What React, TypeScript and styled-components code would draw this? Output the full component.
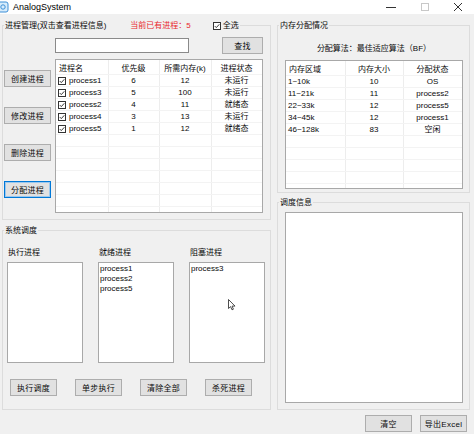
import styled, { createGlobalStyle } from "styled-components";

const GlobalStyle = createGlobalStyle`
  html, body {
    margin: 0;
    padding: 0;
  }
  body {
    width: 474px;
    height: 434px;
    overflow: hidden;
    background: #f0f0f0;
    font-family: "Liberation Sans", "Noto Sans CJK SC", sans-serif;
    font-size: 8px;
    color: #0a0a0a;
  }
`;

const Window = styled.div`
  width: 474px;
  height: 434px;
  display: flex;
  flex-direction: column;
  background: #f0f0f0;
`;

const TitleBar = styled.div`
  height: 14px;
  flex-shrink: 0;
  background: #ffffff;
  display: flex;
  align-items: center;
`;

const TitleText = styled.span`
  margin-left: 3px;
  font-size: 9px;
  color: #000;
`;

const WindowControls = styled.div`
  margin-left: auto;
  display: flex;
  height: 14px;
`;

const ControlButton = styled.div<{ $w: number }>`
  width: ${(p) => p.$w}px;
  height: 14px;
  display: flex;
  align-items: center;
  justify-content: center;
`;

const Body = styled.div`
  flex: 1;
  display: flex;
  flex-direction: column;
  padding: 6px 4px 0 2px;
`;

const Columns = styled.div`
  display: grid;
  grid-template-columns: 269px 193px;
  column-gap: 6px;
`;

const Column = styled.div<{ $gap: number }>`
  display: flex;
  flex-direction: column;
  gap: ${(p) => p.$gap}px;
`;

const GroupBox = styled.fieldset<{ $h: number }>`
  margin: 0;
  padding: 0;
  min-width: 0;
  box-sizing: border-box;
  height: ${(p) => p.$h}px;
  border: 1px solid #dcdcdc;
`;

const Legend = styled.legend`
  margin-left: 1px;
  padding: 0 1px;
  font-size: 8px;
  line-height: 11px;
  color: #0a0a0a;
  display: flex;
  align-items: center;
`;

const CountText = styled.span`
  margin-left: 24px;
  color: #e8262a;
`;

const SelectAll = styled.label`
  margin-left: 22px;
  display: flex;
  align-items: center;
  gap: 2px;
`;

const ProcessLayout = styled.div`
  display: grid;
  grid-template-columns: 47px 208px;
  column-gap: 4px;
  padding-left: 1px;
`;

const SideButtons = styled.div`
  display: flex;
  flex-direction: column;
  gap: 20px;
  padding-top: 39px;
`;

const SearchRow = styled.div`
  margin-top: 6px;
  height: 17px;
  display: flex;
  align-items: center;
  justify-content: space-between;
`;

const SearchInput = styled.div`
  width: 134px;
  height: 15px;
  box-sizing: border-box;
  background: #fff;
  border: 1px solid #8a8a8a;
`;

const Button = styled.button<{ $w?: number; $focused?: boolean }>`
  width: ${(p) => p.$w ?? 47}px;
  height: 17px;
  padding: 0;
  box-sizing: border-box;
  background: #e1e1e1;
  border: 1px solid ${(p) => (p.$focused ? "#0078d7" : "#adadad")};
  box-shadow: ${(p) => (p.$focused ? "inset 0 0 0 1px #9cc8ee" : "none")};
  font-family: "Liberation Sans", "Noto Sans CJK SC", sans-serif;
  font-size: 8px;
  color: #0a0a0a;
  letter-spacing: 0.3px;
`;

const TableFrame = styled.div<{ $w: number; $h: number; $mt: number }>`
  width: ${(p) => p.$w}px;
  height: ${(p) => p.$h}px;
  margin-top: ${(p) => p.$mt}px;
  box-sizing: border-box;
  border: 1px solid #a8a8a8;
  background: #fff;
  overflow: hidden;
`;

const Grid = styled.table`
  border-collapse: collapse;
  table-layout: fixed;
  width: 100%;
  font-size: 8px;
  color: #0a0a0a;
`;

const HeadCell = styled.th<{ $left?: boolean }>`
  height: 14px;
  padding: 0 0 0 ${(p) => (p.$left ? 3 : 0)}px;
  font-weight: normal;
  text-align: ${(p) => (p.$left ? "left" : "center")};
  border-right: 1px solid #ededed;
  border-bottom: 1px solid #f3f3f3;
  white-space: nowrap;
  overflow: hidden;
`;

const Cell = styled.td<{ $left?: boolean }>`
  height: 11px;
  padding: 0 0 0 ${(p) => (p.$left ? 2 : 0)}px;
  line-height: 11px;
  text-align: ${(p) => (p.$left ? "left" : "center")};
  border-right: 1px solid #ededed;
  border-bottom: 1px solid #f3f3f3;
  white-space: nowrap;
  overflow: hidden;
`;

const NameWrap = styled.span`
  display: flex;
  align-items: center;
  gap: 3px;
`;

const AlgoText = styled.div`
  margin-top: 13px;
  line-height: 10px;
  text-align: center;
  color: #0a0a0a;
`;

const GroupInner = styled.div<{ $pl: number; $pr: number }>`
  padding: 0 ${(p) => p.$pr}px 0 ${(p) => p.$pl}px;
`;

const TextArea = styled.div`
  margin-top: 4px;
  height: 191px;
  box-sizing: border-box;
  border: 1px solid #a8a8a8;
  background: #fff;
`;

const SchedGrid = styled.div`
  display: grid;
  grid-template-columns: repeat(3, 76px);
  column-gap: 15px;
  padding-left: 4px;
  margin-top: 12px;
`;

const SchedColumn = styled.div`
  display: flex;
  flex-direction: column;
  gap: 4px;
`;

const SchedLabel = styled.div`
  line-height: 10px;
  padding-left: 1px;
  color: #0a0a0a;
`;

const ListBox = styled.div`
  position: relative;
  height: 101px;
  box-sizing: border-box;
  border: 1px solid #a8a8a8;
  background: #fff;
  padding: 1px 1px;
  line-height: 10px;
  color: #0a0a0a;
`;

const Cursor = styled.svg`
  position: absolute;
  left: 38px;
  top: 36px;
`;

const ActionRow = styled.div`
  display: flex;
  gap: 18px;
  padding-left: 7px;
  margin-top: 16px;
`;

const Footer = styled.div`
  display: flex;
  justify-content: flex-end;
  gap: 8px;
  margin-top: 5px;
  padding-right: 3px;
`;

const CheckBox = () => (
  <svg width="8" height="8" viewBox="0 0 8 8">
    <rect x="0.5" y="0.5" width="7" height="7" fill="#fff" stroke="#333" />
    <path d="M1.8 4.1 L3.3 5.6 L6.3 2.3" fill="none" stroke="#222" strokeWidth="0.9" />
  </svg>
);

const processes = [
  { name: "process1", priority: 6, mem: 12, state: "未运行" },
  { name: "process3", priority: 5, mem: 100, state: "未运行" },
  { name: "process2", priority: 4, mem: 11, state: "就绪态" },
  { name: "process4", priority: 3, mem: 13, state: "未运行" },
  { name: "process5", priority: 1, mem: 12, state: "就绪态" },
];

const memory = [
  { range: "1~10k", size: 10, owner: "OS" },
  { range: "11~21k", size: 11, owner: "process2" },
  { range: "22~33k", size: 12, owner: "process5" },
  { range: "34~45k", size: 12, owner: "process1" },
  { range: "46~128k", size: 83, owner: "空闲" },
];

const blankRows = (count: number, cols: number) =>
  Array.from({ length: count }, (_, i) => (
    <tr key={`b${i}`}>
      {Array.from({ length: cols }, (_, j) => (
        <Cell key={j} />
      ))}
    </tr>
  ));

const App = () => {
  return (
    <Window>
      <GlobalStyle />
      <TitleBar>
        <svg width="10" height="12" viewBox="0 0 10 12">
          <rect x="-2" y="1" width="10" height="10" rx="2" fill="#d7ecfb" stroke="#3d8fd6" />
          <circle cx="3" cy="6" r="2.2" fill="none" stroke="#3d8fd6" />
        </svg>
        <TitleText>AnalogSystem</TitleText>
        <WindowControls>
          <ControlButton $w={34}>
            <svg width="10" height="10" viewBox="0 0 10 10">
              <path d="M0 5.5 H10" stroke="#333" />
            </svg>
          </ControlButton>
          <ControlButton $w={34}>
            <svg width="10" height="10" viewBox="0 0 10 10">
              <rect x="1.5" y="1.5" width="7" height="7" fill="none" stroke="#c8c8c8" />
            </svg>
          </ControlButton>
          <ControlButton $w={32}>
            <svg width="10" height="10" viewBox="0 0 10 10">
              <path d="M1 1 L9 9 M9 1 L1 9" stroke="#333" />
            </svg>
          </ControlButton>
        </WindowControls>
      </TitleBar>

      <Body>
        <Columns>
          <Column $gap={5}>
            <GroupBox $h={200}>
              <Legend>
                <span>进程管理(双击查看进程信息)</span>
                <CountText>当前已有进程：5</CountText>
                <SelectAll>
                  <CheckBox />
                  全选
                </SelectAll>
              </Legend>
              <ProcessLayout>
                <SideButtons>
                  <Button>创建进程</Button>
                  <Button>修改进程</Button>
                  <Button>删除进程</Button>
                  <Button $focused>分配进程</Button>
                </SideButtons>
                <div>
                  <SearchRow>
                    <SearchInput />
                    <Button $w={41}>查找</Button>
                  </SearchRow>
                  <TableFrame $w={208} $h={154} $mt={5}>
                    <Grid>
                      <colgroup>
                        <col style={{ width: 52 }} />
                        <col style={{ width: 51 }} />
                        <col style={{ width: 52 }} />
                        <col style={{ width: 51 }} />
                      </colgroup>
                      <thead>
                        <tr>
                          <HeadCell $left>进程名</HeadCell>
                          <HeadCell>优先级</HeadCell>
                          <HeadCell>所需内存(k)</HeadCell>
                          <HeadCell>进程状态</HeadCell>
                        </tr>
                      </thead>
                      <tbody>
                        {processes.map((p) => (
                          <tr key={p.name}>
                            <Cell $left>
                              <NameWrap>
                                <CheckBox />
                                {p.name}
                              </NameWrap>
                            </Cell>
                            <Cell>{p.priority}</Cell>
                            <Cell>{p.mem}</Cell>
                            <Cell>{p.state}</Cell>
                          </tr>
                        ))}
                        {blankRows(8, 4)}
                      </tbody>
                    </Grid>
                  </TableFrame>
                </div>
              </ProcessLayout>
            </GroupBox>

            <GroupBox $h={185}>
              <Legend>系统调度</Legend>
              <SchedGrid>
                <SchedColumn>
                  <SchedLabel>执行进程</SchedLabel>
                  <ListBox />
                </SchedColumn>
                <SchedColumn>
                  <SchedLabel>就绪进程</SchedLabel>
                  <ListBox>
                    <div>process1</div>
                    <div>process2</div>
                    <div>process5</div>
                  </ListBox>
                </SchedColumn>
                <SchedColumn>
                  <SchedLabel>阻塞进程</SchedLabel>
                  <ListBox>
                    <div>process3</div>
                    <Cursor width="8" height="12" viewBox="0 0 8 12">
                      <path
                        d="M0.5 0.5 L0.5 9.5 L2.6 7.6 L4 10.8 L5.4 10.2 L4.1 7.1 L7 7.1 Z"
                        fill="#fff"
                        stroke="#222"
                        strokeWidth="0.8"
                      />
                    </Cursor>
                  </ListBox>
                </SchedColumn>
              </SchedGrid>
              <ActionRow>
                <Button>执行调度</Button>
                <Button>单步执行</Button>
                <Button>清除全部</Button>
                <Button>杀死进程</Button>
              </ActionRow>
            </GroupBox>
          </Column>

          <Column $gap={4}>
            <GroupBox $h={173}>
              <Legend>内存分配情况</Legend>
              <GroupInner $pl={7} $pr={6}>
                <AlgoText>分配算法：最佳适应算法（BF）</AlgoText>
                <TableFrame $w={178} $h={129} $mt={6}>
                  <Grid>
                    <colgroup>
                      <col style={{ width: 59 }} />
                      <col style={{ width: 58 }} />
                      <col style={{ width: 59 }} />
                    </colgroup>
                    <thead>
                      <tr>
                        <HeadCell $left>内存区域</HeadCell>
                        <HeadCell>内存大小</HeadCell>
                        <HeadCell>分配状态</HeadCell>
                      </tr>
                    </thead>
                    <tbody>
                      {memory.map((m) => (
                        <tr key={m.range}>
                          <Cell $left>{m.range}</Cell>
                          <Cell>{m.size}</Cell>
                          <Cell>{m.owner}</Cell>
                        </tr>
                      ))}
                      {blankRows(5, 3)}
                    </tbody>
                  </Grid>
                </TableFrame>
              </GroupInner>
            </GroupBox>

            <GroupBox $h={213}>
              <Legend>调度信息</Legend>
              <GroupInner $pl={7} $pr={6}>
                <TextArea />
              </GroupInner>
            </GroupBox>
          </Column>
        </Columns>

        <Footer>
          <Button>清空</Button>
          <Button>导出Excel</Button>
        </Footer>
      </Body>
    </Window>
  );
};

export default App;
